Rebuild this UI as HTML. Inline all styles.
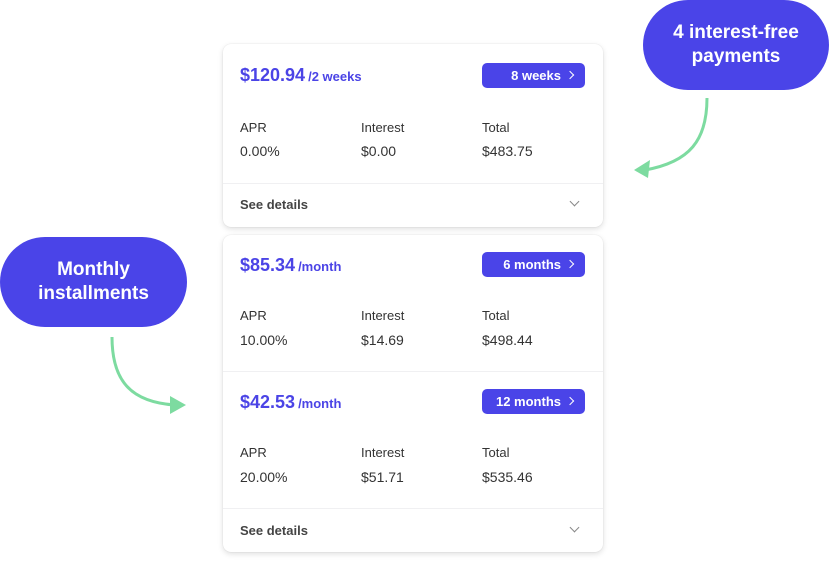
<!DOCTYPE html>
<html><head><style>
body{margin:0;width:830px;height:565px;background:#fff;font-family:"Liberation Sans",sans-serif;position:relative;overflow:hidden}
.card{position:absolute;left:223px;width:380px;background:#fff;border-radius:8px;box-shadow:0 2px 6px rgba(0,0,0,.13),0 0 1px rgba(0,0,0,.15)}
.a{position:absolute;}
.price{position:absolute;left:17px;color:#4b44e6;font-weight:bold;font-size:18px;white-space:nowrap}
.price span{font-size:13px;margin-left:3px}
.btn{position:absolute;left:259px;width:103px;height:25px;background:#4a44e8;border-radius:5px;color:#fff;font-size:13px;font-weight:bold;line-height:25px;text-align:right;box-sizing:border-box;padding-right:24px}
.btn:after{content:"";position:absolute;right:12px;top:9px;width:5px;height:5px;border-top:1.6px solid #fff;border-right:1.6px solid #fff;transform:rotate(45deg)}
.lab{position:absolute;font-size:13px;color:#333}
.val{position:absolute;font-size:14px;color:#333}
.sep{position:absolute;left:0;right:0;height:1px;background:#f0f0f2}
.sd{position:absolute;left:17px;font-size:13px;font-weight:bold;color:#444}
.chev{position:absolute;left:348px;width:6px;height:6px;border-right:1.3px solid #888;border-bottom:1.3px solid #888;transform:rotate(45deg)}
.pill{position:absolute;background:#4a44e8;color:#fff;font-weight:bold;font-size:19px;line-height:24px;text-align:center;display:flex;align-items:center;justify-content:center}
</style></head><body>
<div class="pill" style="left:643px;top:0;width:186px;height:90px;border-radius:45px">4 interest-free<br>payments</div>
<div class="pill" style="left:0;top:237px;width:187px;height:90px;border-radius:45px">Monthly<br>installments</div>
<svg class="a" style="left:0;top:0" width="830" height="565">
<path d="M707 98 C707 140 690 162 645 170" fill="none" stroke="#7ddba0" stroke-width="3"/>
<path d="M634 170 L650 160 L648 178 Z" fill="#7ddba0"/>
<path d="M112 337 C112 380 130 402 175 405" fill="none" stroke="#7ddba0" stroke-width="3"/>
<path d="M186 405 L170 396 L170 414 Z" fill="#7ddba0"/>
</svg>
<div class="card" style="top:44px;height:183px">
<div class="price" style="top:21px">$120.94<span>/2 weeks</span></div>
<div class="btn" style="top:19px">8 weeks</div>
<div class="lab" style="left:17px;top:76px">APR</div><div class="lab" style="left:138px;top:76px">Interest</div><div class="lab" style="left:259px;top:76px">Total</div>
<div class="val" style="left:17px;top:99px">0.00%</div><div class="val" style="left:138px;top:99px">$0.00</div><div class="val" style="left:259px;top:99px">$483.75</div>
<div class="sep" style="top:139px"></div>
<div class="sd" style="top:153px">See details</div><div class="chev" style="top:154px"></div>
</div>
<div class="card" style="top:235px;height:317px">
<div class="price" style="top:20px">$85.34<span>/month</span></div>
<div class="btn" style="top:17px">6 months</div>
<div class="lab" style="left:17px;top:73px">APR</div><div class="lab" style="left:138px;top:73px">Interest</div><div class="lab" style="left:259px;top:73px">Total</div>
<div class="val" style="left:17px;top:97px">10.00%</div><div class="val" style="left:138px;top:97px">$14.69</div><div class="val" style="left:259px;top:97px">$498.44</div>
<div class="sep" style="top:136px"></div>
<div class="price" style="top:157px">$42.53<span>/month</span></div>
<div class="btn" style="top:154px">12 months</div>
<div class="lab" style="left:17px;top:210px">APR</div><div class="lab" style="left:138px;top:210px">Interest</div><div class="lab" style="left:259px;top:210px">Total</div>
<div class="val" style="left:17px;top:234px">20.00%</div><div class="val" style="left:138px;top:234px">$51.71</div><div class="val" style="left:259px;top:234px">$535.46</div>
<div class="sep" style="top:273px"></div>
<div class="sd" style="top:288px">See details</div><div class="chev" style="top:289px"></div>
</div>
</body></html>
